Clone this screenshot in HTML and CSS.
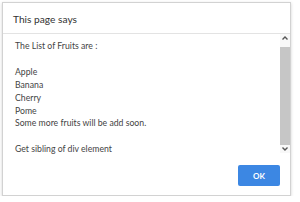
FILE: index.html
```html
<!DOCTYPE html>
<html>
<head>
<meta charset="utf-8">
<link rel="stylesheet" href="styles.css">
</head>
<body>
<div class="dialog">
  <div class="header">This page says</div>
  <div class="content">
    <div class="text">
      <div class="line">The List of Fruits are :</div>
      <div class="line">&nbsp;</div>
      <div class="line">Apple</div>
      <div class="line">Banana</div>
      <div class="line">Cherry</div>
      <div class="line">Pome</div>
      <div class="line">Some more fruits will be add soon.</div>
      <div class="line">&nbsp;</div>
      <div class="line">Get sibling of div element</div>
    </div>
    <div class="scrollbar">
      <div class="arrow-up"><svg width="6" height="4" viewBox="0 0 6 4"><path d="M0.5 3.5 L3 1 L5.5 3.5" fill="none" stroke="#555" stroke-width="1.4"/></svg></div>
      <div class="thumb"></div>
      <div class="arrow-down"><svg width="6" height="4" viewBox="0 0 6 4"><path d="M0.5 0.5 L3 3 L5.5 0.5" fill="none" stroke="#555" stroke-width="1.4"/></svg></div>
    </div>
  </div>
  <div class="footer">
    <div class="btn">OK</div>
  </div>
</div>
</body>
</html>
```
FILE: styles.css
```css
html, body {
  margin: 0;
  padding: 0;
  background: #ffffff;
}
body {
  padding: 2px 0 0 2px;
  font-family: "Lato", "Open Sans", sans-serif;
}
.dialog {
  width: 287px;
  height: 192px;
  border: 1px solid #d2d2d2;
  box-shadow: 0 1px 3px rgba(0,0,0,0.18);
  background: #fff;
  display: flex;
  flex-direction: column;
}
.header {
  height: 31px;
  box-sizing: border-box;
  padding-left: 10px;
  padding-top: 10px;
  font-size: 10.2px;
  color: #333;
  border-bottom: 1px solid #e3e3e3;
}
.content {
  height: 119px;
  display: flex;
  flex-direction: row;
}
.text {
  flex: 1;
  padding: 6px 0 0 12px;
  font-size: 8.7px;
  line-height: 12.9px;
  color: #444;
}
.scrollbar {
  width: 10px;
  display: flex;
  flex-direction: column;
  background: #f8f8f8;
}
.arrow-up {
  height: 13px;
  display: flex;
  justify-content: center;
  align-items: flex-start;
  padding-top: 2px;
  box-sizing: border-box;
}
.thumb {
  flex: 1;
  background: #c6c6c6;
}
.arrow-down {
  height: 8px;
  display: flex;
  justify-content: center;
  align-items: center;
}
.footer {
  flex: 1;
  display: flex;
  justify-content: flex-end;
  padding: 12px 10px 0 0;
}
.btn {
  width: 42px;
  height: 21px;
  background: #3c87e3;
  border-radius: 2px;
  color: #fff;
  font-size: 8px;
  font-weight: bold;
  display: flex;
  align-items: center;
  justify-content: center;
}
```
